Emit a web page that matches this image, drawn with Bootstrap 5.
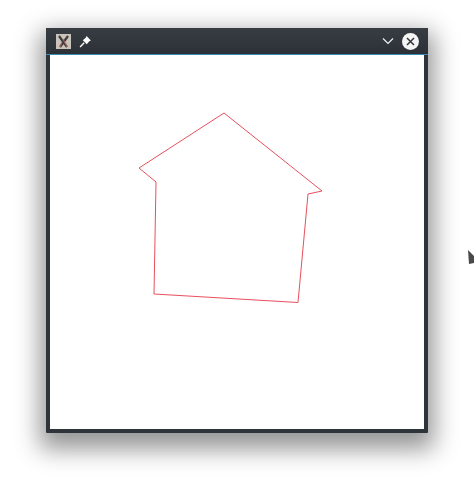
<!DOCTYPE html>
<html lang="en">
<head>
<meta charset="utf-8">
<title>Drawing window</title>
<link href="https://cdn.jsdelivr.net/npm/bootstrap@5.3.0/dist/css/bootstrap.min.css" rel="stylesheet">
<style>
html,body{width:474px;height:479px;overflow:hidden;background:#fff;}
.desk{position:relative;width:474px;height:479px;padding:28px 0 0 46px;}
.win{width:382px;height:405px;background:#2f343a;border-radius:2px 2px 1px 1px;box-shadow:0 10px 24px 6px rgba(0,0,0,.42);}
.tbar{height:26px;padding:0 9px 0 10px;background:linear-gradient(#383d44,#2c3137);}
.tline{height:1px;background:#3daee9;opacity:.7;}
.appic{width:15px;height:15px;}
.pin{width:13px;height:13px;margin-left:8px;}
.chev{width:12px;height:12px;margin-right:8px;}
.closer{width:17px;height:17px;}
.clientarea{margin:0 4px;height:374px;background:#fff;}
.clientarea svg{display:block;width:374px;height:374px;}
.arrow{position:absolute;left:468px;top:250px;width:6px;height:16px;}
</style>
</head>
<body>
<div class="desk">
  <div class="win d-flex flex-column">
    <div class="tbar d-flex align-items-center">
      <svg class="appic" viewBox="0 0 15 15"><rect width="15" height="15" fill="#c9c3bb"/><path d="M3 2 L11 13 M12 2 L4 13" stroke="#3d3d3d" stroke-width="2.2"/><path d="M6 8 L4 13 M7 5 L11 13" stroke="#b5685c" stroke-width="1"/></svg>
      <svg class="pin" viewBox="0 0 12 12"><path d="M7 1 L11 5 L9.5 5.8 L7.2 8.5 L3.5 4.8 L6.2 2.5 Z" fill="#fcfcfc"/><path d="M4.8 7.2 L1 11" stroke="#fcfcfc" stroke-width="1.3"/></svg>
      <div class="flex-grow-1"></div>
      <svg class="chev" viewBox="0 0 12 12"><path d="M1 3.5 L6 8.5 L11 3.5" fill="none" stroke="#eff0f1" stroke-width="1.2"/></svg>
      <svg class="closer" viewBox="0 0 17 17"><circle cx="8.5" cy="8.5" r="8.5" fill="#f4f5f5"/><path d="M5 5 L12 12 M12 5 L5 12" stroke="#31363b" stroke-width="1.5"/></svg>
    </div>
    <div class="tline"></div>
    <div class="clientarea">
      <svg viewBox="50 55 374 374"><polygon points="224,113 322,191 308,194 298,302.5 154,294 156,182 139,168" fill="none" stroke="#e8505c" stroke-width="1"/></svg>
    </div>
  </div>
  <svg class="arrow" viewBox="0 0 6 16"><path d="M0 0 L6 6 L6 13 L1 14 Z" fill="#4a4a4a"/></svg>
</div>
<script src="https://cdn.jsdelivr.net/npm/bootstrap@5.3.0/dist/js/bootstrap.bundle.min.js"></script>
</body>
</html>
